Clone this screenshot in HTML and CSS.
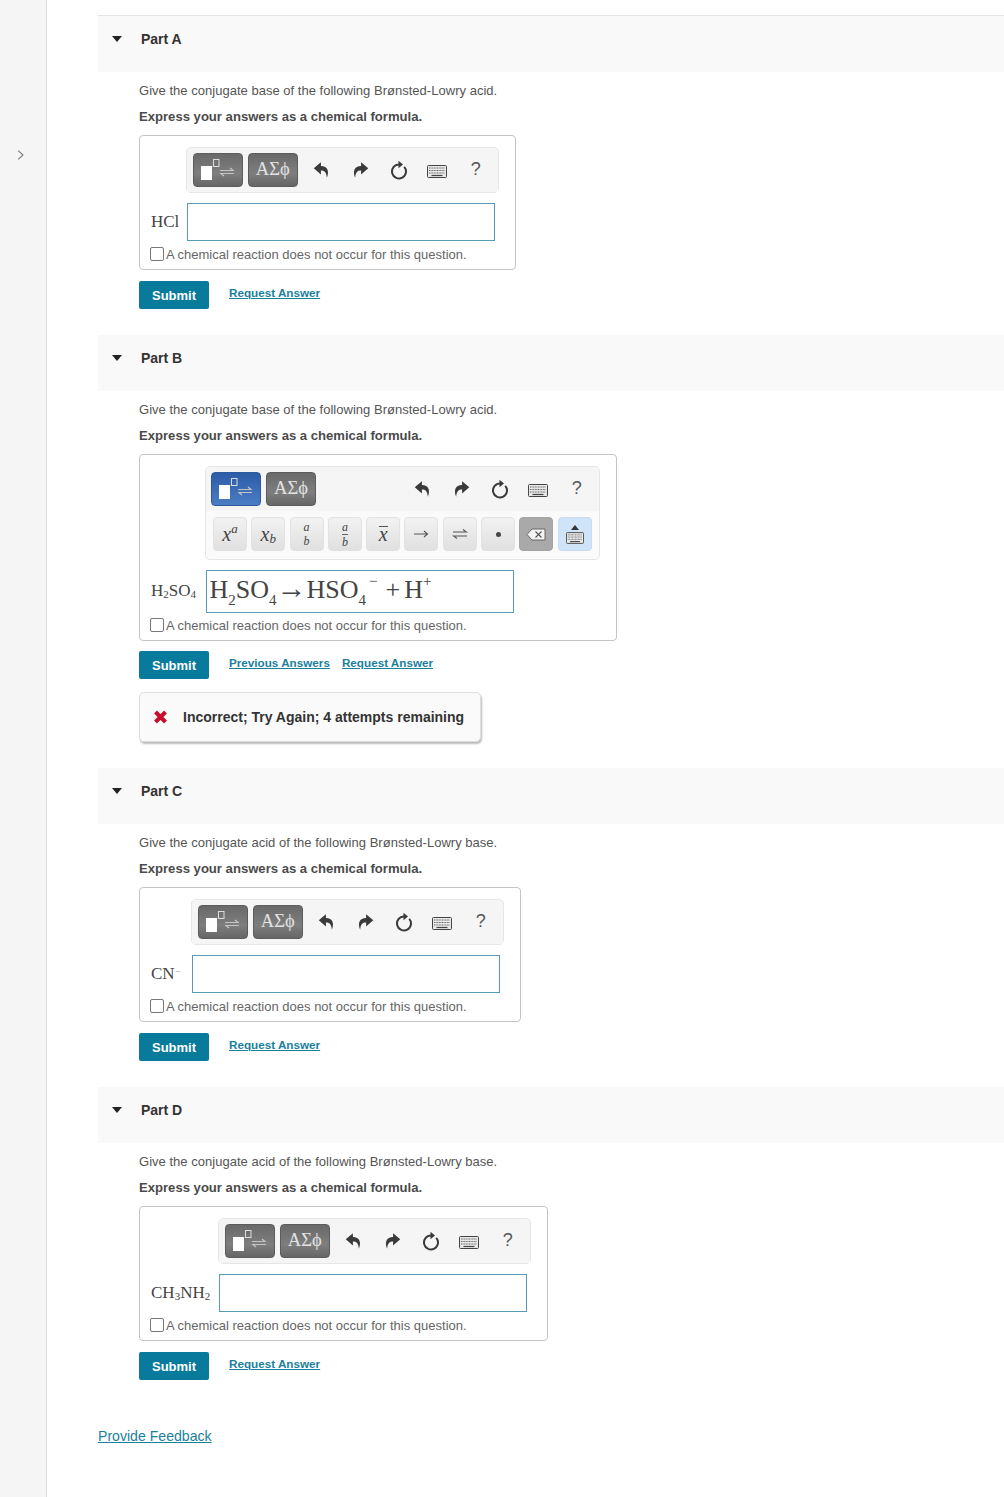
FILE: index.html
```html
<!DOCTYPE html>
<html lang="en">
<head>
  <meta charset="UTF-8" />
  <title>Conjugate acids and bases</title>
  <meta name="viewport" content="width=device-width, initial-scale=1.0" />
  <link rel="stylesheet" href="styles.css">
</head>
<body>

<svg class="icon-defs" width="0" height="0">
  <symbol id="i-template" viewBox="0 0 50 34">
    <rect class="tpl-solid" x="8" y="13" width="11" height="14"/>
    <rect class="tpl-box" x="20.500" y="6.500" width="5.500" height="7"/>
    <path class="tpl-arrow" d="M27 17.500h13l-3-2.500M41 20.500H28l3 2.500"/>
  </symbol>
  <symbol id="i-undo" viewBox="0 0 20 20">
    <path d="M9 3 2.500 8.500 9 14v-3.600c3.200 0 5 1.500 5.400 6.600 2.400-5.500.8-10.600-5.400-10.600z"/>
  </symbol>
  <symbol id="i-redo" viewBox="0 0 20 20">
    <path d="M11 3l6.500 5.500L11 14v-3.600c-3.200 0-5 1.500-5.400 6.600C3.200 11.500 4.800 6.400 11 6.400z"/>
  </symbol>
  <symbol id="i-reset" viewBox="0 0 20 20">
    <path class="line" d="M10 4.500a7 7 0 1 0 5.200 2.300"/>
    <path d="M9.500 .8v7.400l4.500-3.700z"/>
  </symbol>
  <symbol id="i-keys" viewBox="0 0 20 13">
    <rect class="kb-body" x=".5" y=".5" width="19" height="12" rx="1"/>
    <path class="kb-keys" d="M2 3h16M2 5.500h16M2 8h16"/>
    <path class="kb-bar" d="M4.500 10.500h11"/>
  </symbol>
</svg>

<div class="page">
  <aside class="rail">
    <svg class="rail-arrow" viewBox="0 0 10 14" width="8" height="12"><path d="M1.500 1.500 7.500 7l-6 5.500"/></svg>
  </aside>

  <main class="content">

    <section class="part part-first">
      <h3 class="part-title"><span class="caret"></span>Part A</h3>
      <div class="part-body">
        <p class="prompt">Give the conjugate base of the following Brønsted-Lowry acid.</p>
        <p class="hint">Express your answers as a chemical formula.</p>
        <div class="answer-box">
          <div class="species species-a">HCl</div>
          <div class="editor">
            <div class="toolbar">
              <div class="tool-row">
                <button class="mode-btn"><svg width="50" height="34"><use href="#i-template"/></svg></button>
                <button class="mode-btn greek">ΑΣϕ</button>
                <div class="tool-icons">
                  <span class="tool-icon"><svg width="22" height="22"><use href="#i-undo"/></svg></span>
                  <span class="tool-icon"><svg width="22" height="22"><use href="#i-redo"/></svg></span>
                  <span class="tool-icon"><svg width="20" height="20"><use href="#i-reset"/></svg></span>
                  <span class="tool-icon keys"><svg width="20" height="13"><use href="#i-keys"/></svg></span>
                  <span class="tool-icon help">?</span>
                </div>
              </div>
            </div>
            <div class="math-input"></div>
          </div>
          <label class="no-reaction"><input type="checkbox" />A chemical reaction does not occur for this question.</label>
        </div>
        <div class="actions">
          <button class="submit">Submit</button>
          <a class="act-link" href="#">Request Answer</a>
        </div>
      </div>
    </section>

    <section class="part">
      <h3 class="part-title"><span class="caret"></span>Part B</h3>
      <div class="part-body">
        <p class="prompt">Give the conjugate base of the following Brønsted-Lowry acid.</p>
        <p class="hint">Express your answers as a chemical formula.</p>
        <div class="answer-box">
          <div class="species species-b">H<sub>2</sub>SO<sub>4</sub></div>
          <div class="editor">
            <div class="toolbar toolbar-open">
              <div class="tool-row">
                <button class="mode-btn active"><svg width="50" height="34"><use href="#i-template"/></svg></button>
                <button class="mode-btn greek">ΑΣϕ</button>
                <div class="tool-icons">
                  <span class="tool-icon"><svg width="22" height="22"><use href="#i-undo"/></svg></span>
                  <span class="tool-icon"><svg width="22" height="22"><use href="#i-redo"/></svg></span>
                  <span class="tool-icon"><svg width="20" height="20"><use href="#i-reset"/></svg></span>
                  <span class="tool-icon keys"><svg width="20" height="13"><use href="#i-keys"/></svg></span>
                  <span class="tool-icon help">?</span>
                </div>
              </div>
              <div class="key-row">
                <button class="key"><i>x</i><sup><i>a</i></sup></button>
                <button class="key"><i>x</i><sub><i>b</i></sub></button>
                <button class="key"><span class="stack"><i>a</i><i>b</i></span></button>
                <button class="key"><span class="stack frac"><i>a</i><i>b</i></span></button>
                <button class="key"><i class="bar">x</i></button>
                <button class="key">
                  <svg width="16" height="10" viewBox="0 0 16 10"><path class="line-thin" d="M1 5h13M11 2l3.500 3L11 8"/></svg>
                </button>
                <button class="key">
                  <svg width="16" height="12" viewBox="0 0 16 12"><path class="line-thin" d="M1 4h13.500L11 1.500M15 8H1.500L5 10.500"/></svg>
                </button>
                <button class="key"><span class="dot"></span></button>
                <button class="key key-dark">
                  <svg width="20" height="13" viewBox="0 0 20 13"><path class="bksp" d="M6 1h13v11H6L1 6.500z"/><path class="bksp-x" d="M9.500 3.500l6 6M15.500 3.500l-6 6"/></svg>
                </button>
                <button class="key key-blue">
                  <span class="up-tri"></span>
                  <svg width="18" height="12"><use href="#i-keys"/></svg>
                </button>
              </div>
            </div>
            <div class="math-input filled">
              H<sub>2</sub>SO<sub>4</sub><span class="rxn">→</span>HSO<sub>4</sub><sup class="minus">−</sup><span class="plus">+</span>H<sup>+</sup>
            </div>
          </div>
          <label class="no-reaction tight"><input type="checkbox" />A chemical reaction does not occur for this question.</label>
        </div>
        <div class="actions actions-close">
          <button class="submit">Submit</button>
          <a class="act-link" href="#">Previous Answers</a>
          <a class="act-link" href="#">Request Answer</a>
        </div>
        <div class="feedback">
          <svg width="15" height="14" viewBox="0 0 15 14"><path class="cross" d="M2.500 2 12.500 12M12.500 2 2.500 12"/></svg>
          <span>Incorrect; Try Again; 4 attempts remaining</span>
        </div>
      </div>
    </section>

    <section class="part">
      <h3 class="part-title"><span class="caret"></span>Part C</h3>
      <div class="part-body">
        <p class="prompt">Give the conjugate acid of the following Brønsted-Lowry base.</p>
        <p class="hint">Express your answers as a chemical formula.</p>
        <div class="answer-box">
          <div class="species species-c">CN<sup>−</sup></div>
          <div class="editor">
            <div class="toolbar">
              <div class="tool-row">
                <button class="mode-btn"><svg width="50" height="34"><use href="#i-template"/></svg></button>
                <button class="mode-btn greek">ΑΣϕ</button>
                <div class="tool-icons">
                  <span class="tool-icon"><svg width="22" height="22"><use href="#i-undo"/></svg></span>
                  <span class="tool-icon"><svg width="22" height="22"><use href="#i-redo"/></svg></span>
                  <span class="tool-icon"><svg width="20" height="20"><use href="#i-reset"/></svg></span>
                  <span class="tool-icon keys"><svg width="20" height="13"><use href="#i-keys"/></svg></span>
                  <span class="tool-icon help">?</span>
                </div>
              </div>
            </div>
            <div class="math-input"></div>
          </div>
          <label class="no-reaction"><input type="checkbox" />A chemical reaction does not occur for this question.</label>
        </div>
        <div class="actions">
          <button class="submit">Submit</button>
          <a class="act-link" href="#">Request Answer</a>
        </div>
      </div>
    </section>

    <section class="part">
      <h3 class="part-title"><span class="caret"></span>Part D</h3>
      <div class="part-body">
        <p class="prompt">Give the conjugate acid of the following Brønsted-Lowry base.</p>
        <p class="hint">Express your answers as a chemical formula.</p>
        <div class="answer-box">
          <div class="species species-d">CH<sub>3</sub>NH<sub>2</sub></div>
          <div class="editor">
            <div class="toolbar">
              <div class="tool-row">
                <button class="mode-btn"><svg width="50" height="34"><use href="#i-template"/></svg></button>
                <button class="mode-btn greek">ΑΣϕ</button>
                <div class="tool-icons">
                  <span class="tool-icon"><svg width="22" height="22"><use href="#i-undo"/></svg></span>
                  <span class="tool-icon"><svg width="22" height="22"><use href="#i-redo"/></svg></span>
                  <span class="tool-icon"><svg width="20" height="20"><use href="#i-reset"/></svg></span>
                  <span class="tool-icon keys"><svg width="20" height="13"><use href="#i-keys"/></svg></span>
                  <span class="tool-icon help">?</span>
                </div>
              </div>
            </div>
            <div class="math-input"></div>
          </div>
          <label class="no-reaction"><input type="checkbox" />A chemical reaction does not occur for this question.</label>
        </div>
        <div class="actions">
          <button class="submit">Submit</button>
          <a class="act-link" href="#">Request Answer</a>
        </div>
      </div>
    </section>

    <a class="page-feedback" href="#">Provide Feedback</a>
  </main>
</div>

</body>
</html>
```

FILE: styles.css
```css
* { box-sizing: border-box; }
html, body { margin: 0; }
body {
  font-family: "Liberation Sans", Arial, sans-serif;
  font-size: 14px;
  color: #555;
  background: #fff;
  height: 1497px;
  overflow: hidden;
}
.icon-defs { position: absolute; }
.page { display: flex; height: 100%; }

.rail {
  width: 47px;
  flex: none;
  background: #f5f5f5;
  border-right: 1px solid #ddd;
  padding: 149px 0 0 17px;
}
.rail-arrow { display: block; fill: none; stroke: #777; stroke-width: 1.300; }

.content { flex: 1; min-width: 0; padding: 15px 0 0 51px; }

/* part blocks */
.part { margin-bottom: 26px; }
.part-first { border-top: 1px solid #e4e4e4; }
.part-title {
  display: flex;
  align-items: center;
  height: 56px;
  margin: 0;
  padding: 0 0 10px 14px;
  background: #f9f9f9;
  font-size: 14px;
  font-weight: bold;
  color: #333;
}
.caret {
  width: 0;
  height: 0;
  margin-right: 19px;
  border-left: 5.500px solid transparent;
  border-right: 5.500px solid transparent;
  border-top: 6px solid #222;
}
.part-body { padding: 9px 0 0 41px; }
.prompt { margin: 0; line-height: 20px; font-size: 13px; letter-spacing: .02px; }
.hint { margin: 6px 0 8px; line-height: 20px; font-weight: bold; color: #4a4a4a; font-size: 13.100px; }

/* answer box */
.answer-box {
  display: inline-grid;
  grid-template-columns: auto auto;
  align-items: end;
  padding: 11px 16px 7px 11px;
  background: #fff;
  border: 1px solid #c4c4c4;
  border-radius: 4px;
  vertical-align: top;
}
.species {
  font-family: "Liberation Serif", "Times New Roman", serif;
  font-size: 17px;
  line-height: 38px;
  color: #444;
  white-space: nowrap;
}
.species sub { font-size: 11px; line-height: 0; vertical-align: -2px; }
.species sup { font-size: 11px; line-height: 0; vertical-align: 4px; color: #aaa; }
.species-a { width: 35px; }
.species-b { width: 54px; line-height: 44px; }
.species-c { width: 40px; }
.species-d { width: 67px; }

.toolbar {
  width: 313px;
  background: #f5f5f5;
  border: 1px solid #e6e6e6;
  border-radius: 5px;
  margin-bottom: 10px;
}
.toolbar-open { width: 395px; background: #fafafa; }
.tool-row {
  display: flex;
  align-items: center;
  gap: 5px;
  height: 44px;
  padding: 0 3px 0 6px;
  background: #f5f5f5;
  border-radius: 5px 5px 0 0;
}
.toolbar-open .tool-row { padding-left: 5px; }
.mode-btn {
  width: 50px;
  height: 34px;
  padding: 0;
  border: 1px solid #5c5c5c;
  border-radius: 4px;
  background: linear-gradient(#696969, #7e7e7e 60%, #666);
  color: #e2e2e2;
  line-height: 0;
}
.mode-btn svg { display: block; margin: -1px; }
.mode-btn.greek {
  font-family: "Liberation Serif", "Times New Roman", serif;
  font-size: 18.500px;
  line-height: 30px;
  padding-bottom: 2px;
}
.mode-btn.active { background: linear-gradient(#2c5ca6, #4b7dc5); border-color: #2d5a9e; }
.tpl-solid { fill: #fff; }
.tpl-box { fill: none; stroke: #ddd; stroke-width: 1; }
.tpl-arrow { fill: none; stroke: #c4c4c4; stroke-width: 1.200; }
.active .tpl-arrow { stroke: #d8e4f5; }

.tool-icons { display: flex; margin-left: auto; }
.tool-icon {
  display: flex;
  align-items: center;
  justify-content: center;
  width: 38.500px;
  height: 34px;
  fill: #3a3a3a;
}
.tool-icon.keys { padding-top: 3px; }
.line { fill: none; stroke: #3a3a3a; stroke-width: 2; }
.help { font-size: 18px; color: #555; padding-bottom: 1px; }
.kb-body { fill: #e8e8e8; stroke: #444; stroke-width: 1; }
.kb-keys { fill: none; stroke: #666; stroke-width: 1; stroke-dasharray: 1 .6; }
.kb-bar { stroke: #444; stroke-width: 1.200; }

.key-row {
  display: flex;
  gap: 4.300px;
  height: 48px;
  padding: 6px 0 0 7px;
}
.key {
  display: flex;
  align-items: center;
  justify-content: center;
  width: 34px;
  height: 34px;
  padding: 0;
  border: 1px solid #e2e2e2;
  border-radius: 4px;
  background: linear-gradient(#f2f2f2, #e0e0e0);
  font-family: "Liberation Serif", "Times New Roman", serif;
  font-size: 20px;
  color: #444;
}
.key sup, .key sub { font-size: 13px; line-height: 0; }
.key sup { align-self: flex-start; margin-top: 11px; }
.key sub { align-self: flex-end; margin-bottom: 11px; }
.stack { display: flex; flex-direction: column; font-size: 12px; line-height: 14px; }
.stack i { display: block; }
.frac i:first-child { border-bottom: 1px solid #666; }
.bar { border-top: 1px solid #555; line-height: 15px; }
.line-thin { fill: none; stroke: #555; stroke-width: 1.100; }
.dot { width: 5px; height: 5px; border-radius: 50%; background: #444; }
.key-dark { background: #a9a9a9; border-color: #a4a4a4; }
.bksp { fill: #f4f4f4; stroke: #666; stroke-width: 1; }
.bksp-x { fill: none; stroke: #555; stroke-width: 1.100; }
.key-blue {
  flex-direction: column;
  gap: 2px;
  background: #cfe3f9;
  border-color: #c6dcf5;
}
.up-tri {
  width: 0;
  height: 0;
  border-left: 4px solid transparent;
  border-right: 4px solid transparent;
  border-bottom: 5px solid #333;
}

.math-input {
  width: 308px;
  height: 38px;
  margin-left: 1px;
  border: 1.500px solid #559db5;
  background: #fff;
}
.math-input.filled {
  height: 43px;
  padding-left: 2.500px;
  font-family: "Liberation Serif", "Times New Roman", serif;
  font-size: 26px;
  line-height: 38px;
  color: #444;
  white-space: nowrap;
}
.filled sub { font-size: 15px; line-height: 0; vertical-align: -7px; }
.filled sup { font-size: 15px; line-height: 0; vertical-align: 12px; }
.rxn { font-size: 30px; line-height: 0; }
.minus { margin: 0 8px 0 3px; }
.plus { margin-right: 4px; }

.no-reaction {
  grid-column: 1 / -1;
  display: flex;
  align-items: center;
  height: 16px;
  margin: 5px 0 0 -1px;
  font-size: 13px;
  color: #666;
}
.no-reaction.tight { margin-top: 4px; }
.no-reaction input {
  appearance: none;
  width: 14px;
  height: 14px;
  margin: 0 2px 0 0;
  border: 1px solid #777;
  border-radius: 2px;
  background: #fff;
}

/* submit row */
.actions { display: flex; align-items: center; margin-top: 11px; }
.actions-close { margin-top: 10px; }
.submit {
  width: 70px;
  height: 28px;
  margin-right: 20px;
  padding: 0;
  border: 0;
  border-radius: 2px;
  background: #087b9c;
  color: #fff;
  font-family: inherit;
  font-size: 13px;
  font-weight: bold;
}
.act-link {
  margin: 0 12px 6px 0;
  font-size: 11.700px;
  font-weight: bold;
  color: #1b7f9c;
}
.feedback {
  display: flex;
  align-items: center;
  gap: 15px;
  width: 342px;
  height: 50px;
  margin-top: 13px;
  padding-left: 13px;
  background: #fafafa;
  border: 1px solid #ddd;
  border-radius: 5px;
  box-shadow: 1px 2px 2px #bbb;
  font-weight: bold;
  color: #333;
}
.cross { fill: none; stroke: #c8102e; stroke-width: 4; }

.page-feedback {
  display: inline-block;
  margin-top: 22px;
  font-size: 14.100px;
  color: #1b7f9c;
}
```
